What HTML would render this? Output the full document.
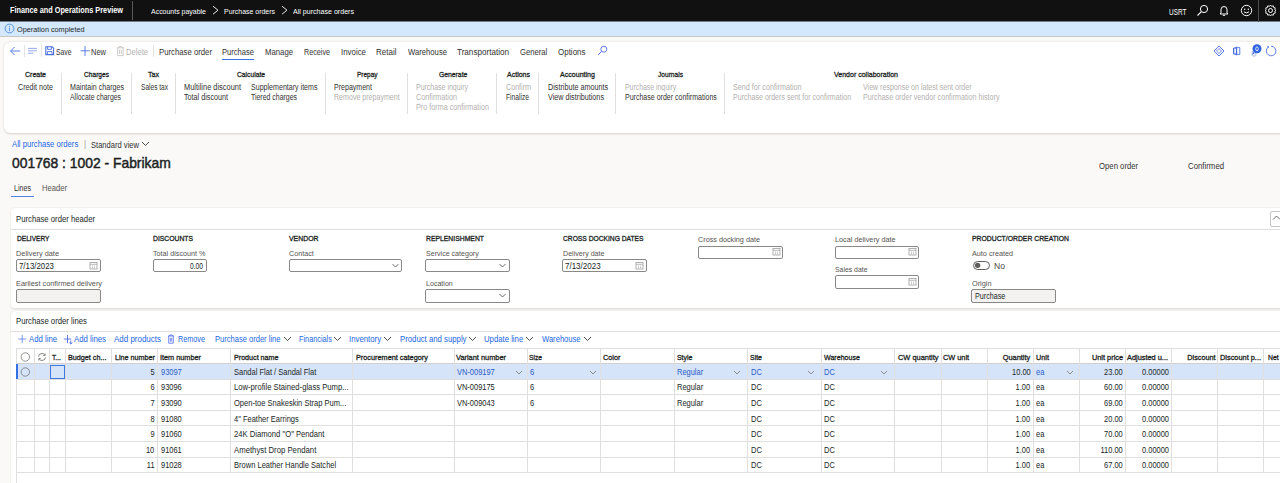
<!DOCTYPE html>
<html><head><meta charset="utf-8"><style>
html,body{margin:0;padding:0;}
body{width:1280px;height:483px;position:relative;overflow:hidden;background:#faf9f8;font-family:"Liberation Sans", sans-serif;}
</style></head><body>
<div style="position:absolute;left:0px;top:0px;width:1280px;height:21px;background:#111111;border-radius:0px;"></div>
<div style="position:absolute;left:0px;top:21px;width:1280px;height:1px;background:#707b86;border-radius:0px;"></div>
<span id="t2" style="position:absolute;left:10px;transform-origin:0 0;top:6.00px;font-size:8.6px;line-height:8.6px;color:#ffffff;font-weight:700;white-space:nowrap;transform:scaleX(0.8510);">Finance and Operations Preview</span>
<div style="position:absolute;left:132px;top:1px;width:1px;height:19px;background:#5a5a5a;border-radius:0px;"></div>
<span id="t4" style="position:absolute;left:151px;transform-origin:0 0;top:8.00px;font-size:7.9px;line-height:7.9px;color:#ffffff;font-weight:400;white-space:nowrap;transform:scaleX(0.8829);">Accounts payable</span>
<svg style="position:absolute;left:212px;top:5px;" width="8" height="11" viewBox="0 0 8 11"><path d="M1 1.2 L6 5.2 L1 9.2" fill="none" stroke="#ffffff" stroke-width="0.9"/></svg>
<span id="t6" style="position:absolute;left:224px;transform-origin:0 0;top:8.00px;font-size:7.9px;line-height:7.9px;color:#ffffff;font-weight:400;white-space:nowrap;transform:scaleX(0.8807);">Purchase orders</span>
<svg style="position:absolute;left:281px;top:5px;" width="8" height="11" viewBox="0 0 8 11"><path d="M1 1.2 L6 5.2 L1 9.2" fill="none" stroke="#ffffff" stroke-width="0.9"/></svg>
<span id="t8" style="position:absolute;left:293px;transform-origin:0 0;top:8.00px;font-size:7.9px;line-height:7.9px;color:#ffffff;font-weight:400;white-space:nowrap;transform:scaleX(0.8973);">All purchase orders</span>
<span id="t9" style="position:absolute;left:1168.6px;transform-origin:0 0;top:8.00px;font-size:9.0px;line-height:9.0px;color:#ffffff;font-weight:400;white-space:nowrap;transform:scaleX(0.7148);">USRT</span>
<svg style="position:absolute;left:1196px;top:4px;" width="13" height="13" viewBox="0 0 13 13"><circle cx="8" cy="5" r="3.6" fill="none" stroke="#fff" stroke-width="1"/><path d="M5.4 7.6 L1.5 11.5" stroke="#fff" stroke-width="1.1"/></svg>
<svg style="position:absolute;left:1218px;top:4px;" width="12" height="13" viewBox="0 0 12 13"><path d="M3 9 V5.5 a3 3 0 0 1 6 0 V9 l1 1 H2 z" fill="none" stroke="#fff" stroke-width="1"/><path d="M4.8 11.3 h2.4" stroke="#fff" stroke-width="1"/></svg>
<svg style="position:absolute;left:1240px;top:4px;" width="13" height="13" viewBox="0 0 13 13"><circle cx="6.5" cy="6.5" r="5.2" fill="none" stroke="#fff" stroke-width="1"/><circle cx="4.7" cy="5.3" r="0.7" fill="#fff"/><circle cx="8.3" cy="5.3" r="0.7" fill="#fff"/><path d="M4 7.8 q2.5 2.4 5 0" fill="none" stroke="#fff" stroke-width="1"/></svg>
<div style="position:absolute;left:1258px;top:0px;width:1px;height:22px;background:#4a4a4a;border-radius:0px;"></div>
<svg style="position:absolute;left:1264px;top:4px;" width="13" height="13" viewBox="0 0 13 13"><circle cx="6.5" cy="6.5" r="2" fill="none" stroke="#fff" stroke-width="1"/><path d="M6.5 1 L7.6 2.4 L9.3 1.8 L9.6 3.5 L11.3 3.9 L10.8 5.6 L12 6.5 L10.8 7.4 L11.3 9.1 L9.6 9.5 L9.3 11.2 L7.6 10.6 L6.5 12 L5.4 10.6 L3.7 11.2 L3.4 9.5 L1.7 9.1 L2.2 7.4 L1 6.5 L2.2 5.6 L1.7 3.9 L3.4 3.5 L3.7 1.8 L5.4 2.4 Z" fill="none" stroke="#fff" stroke-width="0.9"/></svg>
<div style="position:absolute;left:0px;top:22px;width:1280px;height:14px;background:#d3e8fc;border-radius:0px;"></div>
<div style="position:absolute;left:0px;top:36px;width:1280px;height:1px;background:#c8c6c4;border-radius:0px;"></div>
<svg style="position:absolute;left:4px;top:23px;" width="11" height="11" viewBox="0 0 11 11"><circle cx="5.5" cy="5.5" r="4.4" fill="none" stroke="#4f8ad6" stroke-width="0.9"/><path d="M5.5 4.7 V8" stroke="#4f8ad6" stroke-width="0.9"/><circle cx="5.5" cy="3.2" r="0.55" fill="#4f8ad6"/></svg>
<span id="t18" style="position:absolute;left:16.5px;transform-origin:0 0;top:26.00px;font-size:7.9px;line-height:7.9px;color:#201f1e;font-weight:400;white-space:nowrap;transform:scaleX(0.9213);">Operation completed</span>
<div style="position:absolute;left:4px;top:42px;width:1300px;height:91px;background:#ffffff;border-radius:6px;box-shadow:0 0.6px 2px rgba(0,0,0,0.16);"></div>
<svg style="position:absolute;left:9px;top:45px;" width="13" height="12" viewBox="0 0 13 12"><path d="M11.2 6 H1.6 M5.6 2 L1.6 6 L5.6 10" fill="none" stroke="#4a6fe3" stroke-width="0.9"/></svg>
<div style="position:absolute;left:24px;top:45px;width:1px;height:12px;background:#e6e4e2;border-radius:0px;"></div>
<svg style="position:absolute;left:27px;top:45px;" width="11" height="11" viewBox="0 0 11 11"><path d="M1 3.4 H10 M1 5.8 H10 M1 8.2 H6.5" stroke="#8aa0ef" stroke-width="0.9"/></svg>
<div style="position:absolute;left:41px;top:45px;width:1px;height:12px;background:#e6e4e2;border-radius:0px;"></div>
<svg style="position:absolute;left:45px;top:46px;" width="10" height="10" viewBox="0 0 10 10"><path d="M0.8 0.8 H7.2 L8.6 2.2 V8.6 H0.8 Z" fill="none" stroke="#4a6fe3" stroke-width="1.1"/><path d="M2.6 0.8 V3.4 H6.4 V0.8 M2.4 8.6 V5.6 H7 V8.6" fill="none" stroke="#4a6fe3" stroke-width="0.9"/></svg>
<span id="t25" style="position:absolute;left:55.5px;transform-origin:0 0;top:48.00px;font-size:9.2px;line-height:9.2px;color:#323130;font-weight:400;white-space:nowrap;transform:scaleX(0.7397);">Save</span>
<svg style="position:absolute;left:80px;top:45px;" width="11" height="12" viewBox="0 0 11 12"><path d="M5 1 V11 M0.6 5.8 H9.8" stroke="#4a6fe3" stroke-width="0.9"/></svg>
<span id="t27" style="position:absolute;left:91px;transform-origin:0 0;top:48.00px;font-size:9.2px;line-height:9.2px;color:#323130;font-weight:400;white-space:nowrap;transform:scaleX(0.8156);">New</span>
<svg style="position:absolute;left:116px;top:46px;" width="9" height="11" viewBox="0 0 9 11"><path d="M0.8 1.8 H8 M3 1.8 V0.6 H5.8 V1.8 M1.6 1.8 V9.6 H7.2 V1.8 M3.5 3.6 V8 M5.3 3.6 V8" fill="none" stroke="#c8c6c4" stroke-width="0.9"/></svg>
<span id="t29" style="position:absolute;left:126px;transform-origin:0 0;top:48.00px;font-size:9.2px;line-height:9.2px;color:#b3b1af;font-weight:400;white-space:nowrap;transform:scaleX(0.8282);">Delete</span>
<div style="position:absolute;left:153px;top:45px;width:1px;height:12px;background:#e6e4e2;border-radius:0px;"></div>
<span id="t31" style="position:absolute;left:159px;transform-origin:0 0;top:48.00px;font-size:9.2px;line-height:9.2px;color:#323130;font-weight:400;white-space:nowrap;transform:scaleX(0.8436);">Purchase order</span>
<span id="t32" style="position:absolute;left:222px;transform-origin:0 0;top:48.00px;font-size:9.2px;line-height:9.2px;color:#323130;font-weight:400;white-space:nowrap;transform:scaleX(0.8241);">Purchase</span>
<span id="t33" style="position:absolute;left:265px;transform-origin:0 0;top:48.00px;font-size:9.2px;line-height:9.2px;color:#323130;font-weight:400;white-space:nowrap;transform:scaleX(0.8433);">Manage</span>
<span id="t34" style="position:absolute;left:304px;transform-origin:0 0;top:48.00px;font-size:9.2px;line-height:9.2px;color:#323130;font-weight:400;white-space:nowrap;transform:scaleX(0.7831);">Receive</span>
<span id="t35" style="position:absolute;left:341px;transform-origin:0 0;top:48.00px;font-size:9.2px;line-height:9.2px;color:#323130;font-weight:400;white-space:nowrap;transform:scaleX(0.8584);">Invoice</span>
<span id="t36" style="position:absolute;left:376px;transform-origin:0 0;top:48.00px;font-size:9.2px;line-height:9.2px;color:#323130;font-weight:400;white-space:nowrap;transform:scaleX(0.8723);">Retail</span>
<span id="t37" style="position:absolute;left:407.5px;transform-origin:0 0;top:48.00px;font-size:9.2px;line-height:9.2px;color:#323130;font-weight:400;white-space:nowrap;transform:scaleX(0.8359);">Warehouse</span>
<span id="t38" style="position:absolute;left:457px;transform-origin:0 0;top:48.00px;font-size:9.2px;line-height:9.2px;color:#323130;font-weight:400;white-space:nowrap;transform:scaleX(0.8828);">Transportation</span>
<span id="t39" style="position:absolute;left:519.7px;transform-origin:0 0;top:48.00px;font-size:9.2px;line-height:9.2px;color:#323130;font-weight:400;white-space:nowrap;transform:scaleX(0.8352);">General</span>
<span id="t40" style="position:absolute;left:557.5px;transform-origin:0 0;top:48.00px;font-size:9.2px;line-height:9.2px;color:#323130;font-weight:400;white-space:nowrap;transform:scaleX(0.8683);">Options</span>
<div style="position:absolute;left:222px;top:58.5px;width:32px;height:1.6px;background:#3b78e7;border-radius:0px;"></div>
<svg style="position:absolute;left:597px;top:45px;" width="11" height="11" viewBox="0 0 11 11"><circle cx="6.8" cy="4.2" r="3" fill="none" stroke="#4f6bed" stroke-width="0.9"/><path d="M4.7 6.3 L1.2 9.8" stroke="#4f6bed" stroke-width="1"/></svg>
<svg style="position:absolute;left:1213px;top:45px;" width="12" height="12" viewBox="0 0 12 12"><path d="M6 1 L11 6 L6 11 L1 6 Z" fill="none" stroke="#4a6fe3" stroke-width="0.9"/><path d="M6 3.5 L8.5 6 L6 8.5 L3.5 6 Z" fill="none" stroke="#4a6fe3" stroke-width="0.8"/></svg>
<svg style="position:absolute;left:1232px;top:46px;" width="9" height="10" viewBox="0 0 9 10"><path d="M1 2 L5.2 0.6 V9.4 L1 8 Z" fill="#4a6fe3"/><path d="M5.2 1.6 H7.8 V8.4 H5.2" fill="none" stroke="#4a6fe3" stroke-width="0.9"/><rect x="2.3" y="2.6" width="1.6" height="4.8" fill="#fff"/></svg>
<svg style="position:absolute;left:1251px;top:44px;" width="12" height="13" viewBox="0 0 12 13"><rect x="1.2" y="7" width="3.6" height="5" rx="0.8" fill="none" stroke="#9fb0ee" stroke-width="0.9"/><circle cx="6" cy="4.8" r="4.5" fill="#2d62e0"/><path d="M2 8 L1.4 10.6 L4 9" fill="#2d62e0"/><ellipse cx="6" cy="4.8" rx="1.3" ry="2" fill="none" stroke="#fff" stroke-width="0.8"/></svg>
<svg style="position:absolute;left:1265px;top:45px;" width="12" height="12" viewBox="0 0 12 12"><path d="M3.2 2.2 A4.8 4.8 0 1 0 6 1.2" fill="none" stroke="#4a6fe3" stroke-width="0.9"/><path d="M2.2 0.8 L4.2 1.4 L3 3.2 Z" fill="#4a6fe3"/></svg>
<span id="t47" style="position:absolute;left:25px;transform-origin:0 0;top:71.00px;font-size:8.0px;line-height:8.0px;color:#201f1e;font-weight:400;white-space:nowrap;transform:scaleX(0.8744);-webkit-text-stroke:0.3px #201f1e;">Create</span>
<span id="t48" style="position:absolute;left:18px;transform-origin:0 0;top:83.00px;font-size:8.3px;line-height:8.3px;color:#323130;font-weight:400;white-space:nowrap;transform:scaleX(0.8622);">Credit note</span>
<span id="t49" style="position:absolute;left:84px;transform-origin:0 0;top:71.00px;font-size:8.0px;line-height:8.0px;color:#201f1e;font-weight:400;white-space:nowrap;transform:scaleX(0.8264);-webkit-text-stroke:0.3px #201f1e;">Charges</span>
<span id="t50" style="position:absolute;left:70px;transform-origin:0 0;top:83.00px;font-size:8.3px;line-height:8.3px;color:#323130;font-weight:400;white-space:nowrap;transform:scaleX(0.8546);">Maintain charges</span>
<span id="t51" style="position:absolute;left:70px;transform-origin:0 0;top:93.00px;font-size:8.3px;line-height:8.3px;color:#323130;font-weight:400;white-space:nowrap;transform:scaleX(0.8314);">Allocate charges</span>
<span id="t52" style="position:absolute;left:148px;transform-origin:0 0;top:71.00px;font-size:8.0px;line-height:8.0px;color:#201f1e;font-weight:400;white-space:nowrap;transform:scaleX(0.8833);-webkit-text-stroke:0.3px #201f1e;">Tax</span>
<span id="t53" style="position:absolute;left:141px;transform-origin:0 0;top:83.00px;font-size:8.3px;line-height:8.3px;color:#323130;font-weight:400;white-space:nowrap;transform:scaleX(0.7908);">Sales tax</span>
<span id="t54" style="position:absolute;left:237px;transform-origin:0 0;top:71.00px;font-size:8.0px;line-height:8.0px;color:#201f1e;font-weight:400;white-space:nowrap;transform:scaleX(0.8393);-webkit-text-stroke:0.3px #201f1e;">Calculate</span>
<span id="t55" style="position:absolute;left:184px;transform-origin:0 0;top:83.00px;font-size:8.3px;line-height:8.3px;color:#323130;font-weight:400;white-space:nowrap;transform:scaleX(0.8957);">Multiline discount</span>
<span id="t56" style="position:absolute;left:184px;transform-origin:0 0;top:93.00px;font-size:8.3px;line-height:8.3px;color:#323130;font-weight:400;white-space:nowrap;transform:scaleX(0.8673);">Total discount</span>
<span id="t57" style="position:absolute;left:251px;transform-origin:0 0;top:83.00px;font-size:8.3px;line-height:8.3px;color:#323130;font-weight:400;white-space:nowrap;transform:scaleX(0.8532);">Supplementary items</span>
<span id="t58" style="position:absolute;left:251px;transform-origin:0 0;top:93.00px;font-size:8.3px;line-height:8.3px;color:#323130;font-weight:400;white-space:nowrap;transform:scaleX(0.8357);">Tiered charges</span>
<span id="t59" style="position:absolute;left:356.5px;transform-origin:0 0;top:71.00px;font-size:8.0px;line-height:8.0px;color:#201f1e;font-weight:400;white-space:nowrap;transform:scaleX(0.8084);-webkit-text-stroke:0.3px #201f1e;">Prepay</span>
<span id="t60" style="position:absolute;left:334px;transform-origin:0 0;top:83.00px;font-size:8.3px;line-height:8.3px;color:#323130;font-weight:400;white-space:nowrap;transform:scaleX(0.8495);">Prepayment</span>
<span id="t61" style="position:absolute;left:334px;transform-origin:0 0;top:93.00px;font-size:8.3px;line-height:8.3px;color:#b3b1af;font-weight:400;white-space:nowrap;transform:scaleX(0.8531);">Remove prepayment</span>
<span id="t62" style="position:absolute;left:438.7px;transform-origin:0 0;top:71.00px;font-size:8.0px;line-height:8.0px;color:#201f1e;font-weight:400;white-space:nowrap;transform:scaleX(0.8483);-webkit-text-stroke:0.3px #201f1e;">Generate</span>
<span id="t63" style="position:absolute;left:416px;transform-origin:0 0;top:83.00px;font-size:8.3px;line-height:8.3px;color:#b3b1af;font-weight:400;white-space:nowrap;transform:scaleX(0.8413);">Purchase inquiry</span>
<span id="t64" style="position:absolute;left:416px;transform-origin:0 0;top:93.00px;font-size:8.3px;line-height:8.3px;color:#b3b1af;font-weight:400;white-space:nowrap;transform:scaleX(0.8715);">Confirmation</span>
<span id="t65" style="position:absolute;left:416px;transform-origin:0 0;top:103.00px;font-size:8.3px;line-height:8.3px;color:#b3b1af;font-weight:400;white-space:nowrap;transform:scaleX(0.8699);">Pro forma confirmation</span>
<span id="t66" style="position:absolute;left:507px;transform-origin:0 0;top:71.00px;font-size:8.0px;line-height:8.0px;color:#201f1e;font-weight:400;white-space:nowrap;transform:scaleX(0.8767);-webkit-text-stroke:0.3px #201f1e;">Actions</span>
<span id="t67" style="position:absolute;left:506px;transform-origin:0 0;top:83.00px;font-size:8.3px;line-height:8.3px;color:#b3b1af;font-weight:400;white-space:nowrap;transform:scaleX(0.8607);">Confirm</span>
<span id="t68" style="position:absolute;left:506px;transform-origin:0 0;top:93.00px;font-size:8.3px;line-height:8.3px;color:#323130;font-weight:400;white-space:nowrap;transform:scaleX(0.8044);">Finalize</span>
<span id="t69" style="position:absolute;left:560px;transform-origin:0 0;top:71.00px;font-size:8.0px;line-height:8.0px;color:#201f1e;font-weight:400;white-space:nowrap;transform:scaleX(0.8840);-webkit-text-stroke:0.3px #201f1e;">Accounting</span>
<span id="t70" style="position:absolute;left:548px;transform-origin:0 0;top:83.00px;font-size:8.3px;line-height:8.3px;color:#323130;font-weight:400;white-space:nowrap;transform:scaleX(0.8674);">Distribute amounts</span>
<span id="t71" style="position:absolute;left:548px;transform-origin:0 0;top:93.00px;font-size:8.3px;line-height:8.3px;color:#323130;font-weight:400;white-space:nowrap;transform:scaleX(0.8693);">View distributions</span>
<span id="t72" style="position:absolute;left:658px;transform-origin:0 0;top:71.00px;font-size:8.0px;line-height:8.0px;color:#201f1e;font-weight:400;white-space:nowrap;transform:scaleX(0.8264);-webkit-text-stroke:0.3px #201f1e;">Journals</span>
<span id="t73" style="position:absolute;left:624.7px;transform-origin:0 0;top:83.00px;font-size:8.3px;line-height:8.3px;color:#b3b1af;font-weight:400;white-space:nowrap;transform:scaleX(0.8299);">Purchase inquiry</span>
<span id="t74" style="position:absolute;left:624.7px;transform-origin:0 0;top:93.00px;font-size:8.3px;line-height:8.3px;color:#323130;font-weight:400;white-space:nowrap;transform:scaleX(0.8471);">Purchase order confirmations</span>
<span id="t75" style="position:absolute;left:834px;transform-origin:0 0;top:71.00px;font-size:8.0px;line-height:8.0px;color:#201f1e;font-weight:400;white-space:nowrap;transform:scaleX(0.8773);-webkit-text-stroke:0.3px #201f1e;">Vendor collaboration</span>
<span id="t76" style="position:absolute;left:733.4px;transform-origin:0 0;top:83.00px;font-size:8.3px;line-height:8.3px;color:#b3b1af;font-weight:400;white-space:nowrap;transform:scaleX(0.8697);">Send for confirmation</span>
<span id="t77" style="position:absolute;left:733.4px;transform-origin:0 0;top:93.00px;font-size:8.3px;line-height:8.3px;color:#b3b1af;font-weight:400;white-space:nowrap;transform:scaleX(0.8536);">Purchase orders sent for confirmation</span>
<span id="t78" style="position:absolute;left:862.5px;transform-origin:0 0;top:83.00px;font-size:8.3px;line-height:8.3px;color:#b3b1af;font-weight:400;white-space:nowrap;transform:scaleX(0.8503);">View response on latest sent order</span>
<span id="t79" style="position:absolute;left:862.5px;transform-origin:0 0;top:93.00px;font-size:8.3px;line-height:8.3px;color:#b3b1af;font-weight:400;white-space:nowrap;transform:scaleX(0.8604);">Purchase order vendor confirmation history</span>
<div style="position:absolute;left:61px;top:73px;width:1px;height:41px;background:#e1dfdd;border-radius:0px;"></div>
<div style="position:absolute;left:131px;top:73px;width:1px;height:41px;background:#e1dfdd;border-radius:0px;"></div>
<div style="position:absolute;left:175px;top:73px;width:1px;height:41px;background:#e1dfdd;border-radius:0px;"></div>
<div style="position:absolute;left:325px;top:73px;width:1px;height:41px;background:#e1dfdd;border-radius:0px;"></div>
<div style="position:absolute;left:407px;top:73px;width:1px;height:41px;background:#e1dfdd;border-radius:0px;"></div>
<div style="position:absolute;left:496px;top:73px;width:1px;height:41px;background:#e1dfdd;border-radius:0px;"></div>
<div style="position:absolute;left:538px;top:73px;width:1px;height:41px;background:#e1dfdd;border-radius:0px;"></div>
<div style="position:absolute;left:615px;top:73px;width:1px;height:41px;background:#e1dfdd;border-radius:0px;"></div>
<div style="position:absolute;left:724px;top:73px;width:1px;height:41px;background:#e1dfdd;border-radius:0px;"></div>
<span id="t89" style="position:absolute;left:11.75px;transform-origin:0 0;top:140.00px;font-size:8.3px;line-height:8.3px;color:#2266e3;font-weight:400;white-space:nowrap;transform:scaleX(0.9268);">All purchase orders</span>
<span id="t90" style="position:absolute;left:84px;transform-origin:0 0;top:140.00px;font-size:8.3px;line-height:8.3px;color:#a19f9d;font-weight:400;white-space:nowrap;">|</span>
<span id="t91" style="position:absolute;left:91px;transform-origin:0 0;top:141.00px;font-size:9.3px;line-height:9.3px;color:#323130;font-weight:400;white-space:nowrap;transform:scaleX(0.8146);">Standard view</span>
<svg style="position:absolute;left:141px;top:141px;" width="9" height="6" viewBox="0 0 9 6"><path d="M1 1 L4.5 4.5 L8 1" fill="none" stroke="#323130" stroke-width="0.9"/></svg>
<span id="t93" style="position:absolute;left:11.75px;transform-origin:0 0;top:156.00px;font-size:14.2px;line-height:14.2px;color:#201f1e;font-weight:400;white-space:nowrap;transform:scaleX(0.9771);-webkit-text-stroke:0.45px #201f1e;">001768 : 1002 - Fabrikam</span>
<span id="t94" style="position:absolute;left:14px;transform-origin:0 0;top:184.00px;font-size:8.3px;line-height:8.3px;color:#323130;font-weight:400;white-space:nowrap;transform:scaleX(0.8567);">Lines</span>
<span id="t95" style="position:absolute;left:42px;transform-origin:0 0;top:184.00px;font-size:8.3px;line-height:8.3px;color:#55534f;font-weight:400;white-space:nowrap;transform:scaleX(0.9185);">Header</span>
<div style="position:absolute;left:11px;top:195.6px;width:23px;height:1.5px;background:#4a85e8;border-radius:0px;"></div>
<span id="t97" style="position:absolute;left:1098.8px;transform-origin:0 0;top:162.00px;font-size:8.3px;line-height:8.3px;color:#323130;font-weight:400;white-space:nowrap;transform:scaleX(0.9337);">Open order</span>
<span id="t98" style="position:absolute;left:1187.7px;transform-origin:0 0;top:162.00px;font-size:8.3px;line-height:8.3px;color:#323130;font-weight:400;white-space:nowrap;transform:scaleX(0.9430);">Confirmed</span>
<div style="position:absolute;left:10.5px;top:208px;width:1290px;height:99.5px;background:#ffffff;border-radius:4px;box-shadow:0 0.6px 2px rgba(0,0,0,0.14);"></div>
<span id="t100" style="position:absolute;left:16px;transform-origin:0 0;top:215.00px;font-size:8.8px;line-height:8.8px;color:#201f1e;font-weight:400;white-space:nowrap;transform:scaleX(0.8779);">Purchase order header</span>
<div style="position:absolute;left:10.5px;top:229px;width:1290px;height:1px;background:#e1dfdd;border-radius:0px;"></div>
<div style="position:absolute;left:1270px;top:211.3px;width:20px;height:15.3px;background:#ffffff;border:1px solid #c8c6c4;box-sizing:border-box;border-radius:2px;"></div>
<svg style="position:absolute;left:1272px;top:214px;" width="8" height="8" viewBox="0 0 8 8"><path d="M1 5.5 L4.5 2 L8 5.5" fill="none" stroke="#605e5c" stroke-width="0.9"/></svg>
<span id="t104" style="position:absolute;left:16.5px;transform-origin:0 0;top:235.00px;font-size:7.6px;line-height:7.6px;color:#201f1e;font-weight:400;white-space:nowrap;transform:scaleX(0.8681);-webkit-text-stroke:0.32px #201f1e;">DELIVERY</span>
<span id="t105" style="position:absolute;left:16px;transform-origin:0 0;top:250.00px;font-size:8.0px;line-height:8.0px;color:#55534f;font-weight:400;white-space:nowrap;transform:scaleX(0.9210);">Delivery date</span>
<div style="position:absolute;left:16px;top:259.3px;width:84.5px;height:13.199999999999989px;background:#ffffff;border:1px solid #8a8886;box-sizing:border-box;border-radius:2px;"></div>
<span id="t107" style="position:absolute;left:19px;transform-origin:0 0;top:262.00px;font-size:9px;line-height:9px;color:#201f1e;font-weight:400;white-space:nowrap;transform:scaleX(0.8740);">7/13/2023</span>
<svg style="position:absolute;left:89px;top:261px;" width="9" height="9" viewBox="0 0 9 9"><rect x="1" y="1.5" width="7" height="6.5" fill="none" stroke="#a19f9d" stroke-width="0.8"/><path d="M1 3.3 H8 M3 5 h1 M5 5 h1 M3 6.6 h1 M5 6.6 h1" stroke="#a19f9d" stroke-width="0.7"/></svg>
<span id="t109" style="position:absolute;left:16px;transform-origin:0 0;top:280.00px;font-size:8.0px;line-height:8.0px;color:#55534f;font-weight:400;white-space:nowrap;transform:scaleX(0.9167);">Earliest confirmed delivery</span>
<div style="position:absolute;left:16px;top:289px;width:84.5px;height:13.5px;background:#f3f2f1;border:1px solid #8a8886;box-sizing:border-box;border-radius:2px;"></div>
<span id="t111" style="position:absolute;left:153px;transform-origin:0 0;top:235.00px;font-size:7.6px;line-height:7.6px;color:#201f1e;font-weight:400;white-space:nowrap;transform:scaleX(0.8942);-webkit-text-stroke:0.32px #201f1e;">DISCOUNTS</span>
<span id="t112" style="position:absolute;left:153px;transform-origin:0 0;top:250.00px;font-size:8.0px;line-height:8.0px;color:#55534f;font-weight:400;white-space:nowrap;transform:scaleX(0.9010);">Total discount %</span>
<div style="position:absolute;left:152.5px;top:259.3px;width:54.0px;height:13.199999999999989px;background:#ffffff;border:1px solid #8a8886;box-sizing:border-box;border-radius:2px;"></div>
<span id="t114" style="position:absolute;left:190px;transform-origin:0 0;top:262.00px;font-size:9px;line-height:9px;color:#201f1e;font-weight:400;white-space:nowrap;transform:scaleX(0.7415);">0.00</span>
<span id="t115" style="position:absolute;left:289.4px;transform-origin:0 0;top:235.00px;font-size:7.6px;line-height:7.6px;color:#201f1e;font-weight:400;white-space:nowrap;transform:scaleX(0.9108);-webkit-text-stroke:0.32px #201f1e;">VENDOR</span>
<span id="t116" style="position:absolute;left:289px;transform-origin:0 0;top:250.00px;font-size:8.0px;line-height:8.0px;color:#55534f;font-weight:400;white-space:nowrap;transform:scaleX(0.8975);">Contact</span>
<div style="position:absolute;left:289px;top:259.3px;width:113px;height:13.199999999999989px;background:#ffffff;border:1px solid #8a8886;box-sizing:border-box;border-radius:2px;"></div>
<svg style="position:absolute;left:391px;top:263px;" width="9" height="6" viewBox="0 0 9 6"><path d="M1.5 1 L4.5 4 L7.5 1" fill="none" stroke="#605e5c" stroke-width="0.9"/></svg>
<span id="t119" style="position:absolute;left:426px;transform-origin:0 0;top:235.00px;font-size:7.6px;line-height:7.6px;color:#201f1e;font-weight:400;white-space:nowrap;transform:scaleX(0.8984);-webkit-text-stroke:0.32px #201f1e;">REPLENISHMENT</span>
<span id="t120" style="position:absolute;left:426px;transform-origin:0 0;top:250.00px;font-size:8.0px;line-height:8.0px;color:#55534f;font-weight:400;white-space:nowrap;transform:scaleX(0.8852);">Service category</span>
<div style="position:absolute;left:425px;top:259.3px;width:84.69999999999999px;height:13.199999999999989px;background:#ffffff;border:1px solid #8a8886;box-sizing:border-box;border-radius:2px;"></div>
<svg style="position:absolute;left:498px;top:263px;" width="9" height="6" viewBox="0 0 9 6"><path d="M1.5 1 L4.5 4 L7.5 1" fill="none" stroke="#605e5c" stroke-width="0.9"/></svg>
<span id="t123" style="position:absolute;left:426px;transform-origin:0 0;top:280.00px;font-size:8.0px;line-height:8.0px;color:#55534f;font-weight:400;white-space:nowrap;transform:scaleX(0.8860);">Location</span>
<div style="position:absolute;left:425px;top:289px;width:84.69999999999999px;height:13.5px;background:#ffffff;border:1px solid #8a8886;box-sizing:border-box;border-radius:2px;"></div>
<svg style="position:absolute;left:498px;top:293px;" width="9" height="6" viewBox="0 0 9 6"><path d="M1.5 1 L4.5 4 L7.5 1" fill="none" stroke="#605e5c" stroke-width="0.9"/></svg>
<span id="t126" style="position:absolute;left:562.5px;transform-origin:0 0;top:235.00px;font-size:7.6px;line-height:7.6px;color:#201f1e;font-weight:400;white-space:nowrap;transform:scaleX(0.8805);-webkit-text-stroke:0.32px #201f1e;">CROSS DOCKING DATES</span>
<span id="t127" style="position:absolute;left:562.5px;transform-origin:0 0;top:250.00px;font-size:8.0px;line-height:8.0px;color:#55534f;font-weight:400;white-space:nowrap;transform:scaleX(0.8889);">Delivery date</span>
<div style="position:absolute;left:562px;top:259.3px;width:84.5px;height:13.199999999999989px;background:#ffffff;border:1px solid #8a8886;box-sizing:border-box;border-radius:2px;"></div>
<span id="t129" style="position:absolute;left:565px;transform-origin:0 0;top:262.00px;font-size:9px;line-height:9px;color:#201f1e;font-weight:400;white-space:nowrap;transform:scaleX(0.8890);">7/13/2023</span>
<svg style="position:absolute;left:635px;top:261px;" width="9" height="9" viewBox="0 0 9 9"><rect x="1" y="1.5" width="7" height="6.5" fill="none" stroke="#a19f9d" stroke-width="0.8"/><path d="M1 3.3 H8 M3 5 h1 M5 5 h1 M3 6.6 h1 M5 6.6 h1" stroke="#a19f9d" stroke-width="0.7"/></svg>
<span id="t131" style="position:absolute;left:698px;transform-origin:0 0;top:236.00px;font-size:8.0px;line-height:8.0px;color:#55534f;font-weight:400;white-space:nowrap;transform:scaleX(0.9053);">Cross docking date</span>
<div style="position:absolute;left:698.4px;top:245.6px;width:84.60000000000002px;height:13.150000000000006px;background:#ffffff;border:1px solid #8a8886;box-sizing:border-box;border-radius:2px;"></div>
<svg style="position:absolute;left:772px;top:247px;" width="9" height="9" viewBox="0 0 9 9"><rect x="1" y="1.5" width="7" height="6.5" fill="none" stroke="#a19f9d" stroke-width="0.8"/><path d="M1 3.3 H8 M3 5 h1 M5 5 h1 M3 6.6 h1 M5 6.6 h1" stroke="#a19f9d" stroke-width="0.7"/></svg>
<span id="t134" style="position:absolute;left:835px;transform-origin:0 0;top:236.00px;font-size:8.0px;line-height:8.0px;color:#55534f;font-weight:400;white-space:nowrap;transform:scaleX(0.9083);">Local delivery date</span>
<div style="position:absolute;left:835px;top:245.6px;width:84.39999999999998px;height:13.150000000000006px;background:#ffffff;border:1px solid #8a8886;box-sizing:border-box;border-radius:2px;"></div>
<svg style="position:absolute;left:908px;top:247px;" width="9" height="9" viewBox="0 0 9 9"><rect x="1" y="1.5" width="7" height="6.5" fill="none" stroke="#a19f9d" stroke-width="0.8"/><path d="M1 3.3 H8 M3 5 h1 M5 5 h1 M3 6.6 h1 M5 6.6 h1" stroke="#a19f9d" stroke-width="0.7"/></svg>
<span id="t137" style="position:absolute;left:835px;transform-origin:0 0;top:266.00px;font-size:8.0px;line-height:8.0px;color:#55534f;font-weight:400;white-space:nowrap;transform:scaleX(0.8595);">Sales date</span>
<div style="position:absolute;left:835px;top:275.3px;width:84.39999999999998px;height:13.449999999999989px;background:#ffffff;border:1px solid #8a8886;box-sizing:border-box;border-radius:2px;"></div>
<svg style="position:absolute;left:908px;top:277px;" width="9" height="9" viewBox="0 0 9 9"><rect x="1" y="1.5" width="7" height="6.5" fill="none" stroke="#a19f9d" stroke-width="0.8"/><path d="M1 3.3 H8 M3 5 h1 M5 5 h1 M3 6.6 h1 M5 6.6 h1" stroke="#a19f9d" stroke-width="0.7"/></svg>
<span id="t140" style="position:absolute;left:972px;transform-origin:0 0;top:235.00px;font-size:7.6px;line-height:7.6px;color:#201f1e;font-weight:400;white-space:nowrap;transform:scaleX(0.8992);-webkit-text-stroke:0.32px #201f1e;">PRODUCT/ORDER CREATION</span>
<span id="t141" style="position:absolute;left:972px;transform-origin:0 0;top:250.00px;font-size:8.0px;line-height:8.0px;color:#55534f;font-weight:400;white-space:nowrap;transform:scaleX(0.9036);">Auto created</span>
<div style="position:absolute;left:972.8px;top:261px;width:17.2px;height:8.7px;background:#ffffff;border:1px solid #605e5c;box-sizing:border-box;border-radius:5px;"></div>
<svg style="position:absolute;left:974px;top:262px;" width="8" height="7" viewBox="0 0 8 7"><circle cx="3.6" cy="3.35" r="2.7" fill="#605e5c"/></svg>
<span id="t144" style="position:absolute;left:994px;transform-origin:0 0;top:262.00px;font-size:8.3px;line-height:8.3px;color:#484644;font-weight:400;white-space:nowrap;transform:scaleX(1.0368);">No</span>
<span id="t145" style="position:absolute;left:972px;transform-origin:0 0;top:280.00px;font-size:8.0px;line-height:8.0px;color:#55534f;font-weight:400;white-space:nowrap;transform:scaleX(0.9136);">Origin</span>
<div style="position:absolute;left:971px;top:289px;width:84.59999999999991px;height:13.5px;background:#f3f2f1;border:1px solid #8a8886;box-sizing:border-box;border-radius:2px;"></div>
<span id="t147" style="position:absolute;left:974.7px;transform-origin:0 0;top:292.00px;font-size:9px;line-height:9px;color:#201f1e;font-weight:400;white-space:nowrap;transform:scaleX(0.7967);">Purchase</span>
<div style="position:absolute;left:10.5px;top:311px;width:1290px;height:200px;background:#ffffff;border-radius:4px;box-shadow:0 0.6px 2px rgba(0,0,0,0.14);"></div>
<span id="t149" style="position:absolute;left:16px;transform-origin:0 0;top:317.00px;font-size:8.8px;line-height:8.8px;color:#201f1e;font-weight:400;white-space:nowrap;transform:scaleX(0.8799);">Purchase order lines</span>
<div style="position:absolute;left:10.5px;top:331px;width:1290px;height:1px;background:#e1dfdd;border-radius:0px;"></div>
<svg style="position:absolute;left:17px;top:334px;" width="10" height="10" viewBox="0 0 10 10"><path d="M5.2 1 V9 M1.2 5 H9.2" stroke="#5a7ae6" stroke-width="0.8"/></svg>
<span id="t152" style="position:absolute;left:29px;transform-origin:0 0;top:335.00px;font-size:8.6px;line-height:8.6px;color:#2266e3;font-weight:400;white-space:nowrap;transform:scaleX(0.9014);">Add line</span>
<svg style="position:absolute;left:63px;top:334px;" width="11" height="11" viewBox="0 0 11 11"><path d="M4.5 1 V9 M0.8 5 H8.2 M7.8 6.5 V10 M6.3 8.6 L7.8 10 L9.3 8.6" fill="none" stroke="#4f6bed" stroke-width="0.9"/></svg>
<span id="t154" style="position:absolute;left:74px;transform-origin:0 0;top:335.00px;font-size:8.6px;line-height:8.6px;color:#2266e3;font-weight:400;white-space:nowrap;transform:scaleX(0.9050);">Add lines</span>
<span id="t155" style="position:absolute;left:114px;transform-origin:0 0;top:335.00px;font-size:8.6px;line-height:8.6px;color:#2266e3;font-weight:400;white-space:nowrap;transform:scaleX(0.9281);">Add products</span>
<svg style="position:absolute;left:167px;top:334px;" width="8" height="10" viewBox="0 0 8 10"><path d="M1 2 H7 M2.8 2 V1 H5.2 V2 M1.7 2 V9.2 H6.3 V2 M3.3 3.8 V7.6 M4.7 3.8 V7.6" fill="none" stroke="#4f6bed" stroke-width="0.8"/></svg>
<span id="t157" style="position:absolute;left:178px;transform-origin:0 0;top:335.00px;font-size:8.6px;line-height:8.6px;color:#2266e3;font-weight:400;white-space:nowrap;transform:scaleX(0.8438);">Remove</span>
<span id="t158" style="position:absolute;left:215px;transform-origin:0 0;top:335.00px;font-size:8.6px;line-height:8.6px;color:#2266e3;font-weight:400;white-space:nowrap;transform:scaleX(0.8788);">Purchase order line</span>
<svg style="position:absolute;left:282.5px;top:336px;" width="9" height="6" viewBox="0 0 9 6"><path d="M1 1 L4.5 4.5 L8 1" fill="none" stroke="#3b3a39" stroke-width="0.9"/></svg>
<span id="t160" style="position:absolute;left:298.75px;transform-origin:0 0;top:335.00px;font-size:8.6px;line-height:8.6px;color:#2266e3;font-weight:400;white-space:nowrap;transform:scaleX(0.8488);">Financials</span>
<svg style="position:absolute;left:333px;top:336px;" width="9" height="6" viewBox="0 0 9 6"><path d="M1 1 L4.5 4.5 L8 1" fill="none" stroke="#3b3a39" stroke-width="0.9"/></svg>
<span id="t162" style="position:absolute;left:349.3px;transform-origin:0 0;top:335.00px;font-size:8.6px;line-height:8.6px;color:#2266e3;font-weight:400;white-space:nowrap;transform:scaleX(0.9078);">Inventory</span>
<svg style="position:absolute;left:383px;top:336px;" width="9" height="6" viewBox="0 0 9 6"><path d="M1 1 L4.5 4.5 L8 1" fill="none" stroke="#3b3a39" stroke-width="0.9"/></svg>
<span id="t164" style="position:absolute;left:399.5px;transform-origin:0 0;top:335.00px;font-size:8.6px;line-height:8.6px;color:#2266e3;font-weight:400;white-space:nowrap;transform:scaleX(0.9038);">Product and supply</span>
<svg style="position:absolute;left:467.6px;top:336px;" width="9" height="6" viewBox="0 0 9 6"><path d="M1 1 L4.5 4.5 L8 1" fill="none" stroke="#3b3a39" stroke-width="0.9"/></svg>
<span id="t166" style="position:absolute;left:483.8px;transform-origin:0 0;top:335.00px;font-size:8.6px;line-height:8.6px;color:#2266e3;font-weight:400;white-space:nowrap;transform:scaleX(0.9015);">Update line</span>
<svg style="position:absolute;left:524.5px;top:336px;" width="9" height="6" viewBox="0 0 9 6"><path d="M1 1 L4.5 4.5 L8 1" fill="none" stroke="#3b3a39" stroke-width="0.9"/></svg>
<span id="t168" style="position:absolute;left:542px;transform-origin:0 0;top:335.00px;font-size:8.6px;line-height:8.6px;color:#2266e3;font-weight:400;white-space:nowrap;transform:scaleX(0.8845);">Warehouse</span>
<svg style="position:absolute;left:582.5px;top:336px;" width="9" height="6" viewBox="0 0 9 6"><path d="M1 1 L4.5 4.5 L8 1" fill="none" stroke="#3b3a39" stroke-width="0.9"/></svg>
<div style="position:absolute;left:16px;top:364px;width:1270px;height:15px;background:#d6e4f9;border-radius:0px;"></div>
<div style="position:absolute;left:16px;top:348px;width:1270px;height:1px;background:#e1dfdd;border-radius:0px;"></div>
<div style="position:absolute;left:16px;top:363px;width:1270px;height:1px;background:#d2d0ce;border-radius:0px;"></div>
<div style="position:absolute;left:16px;top:379px;width:1270px;height:1px;background:#e1dfdd;border-radius:0px;"></div>
<div style="position:absolute;left:16px;top:394px;width:1270px;height:1px;background:#e1dfdd;border-radius:0px;"></div>
<div style="position:absolute;left:16px;top:410px;width:1270px;height:1px;background:#e1dfdd;border-radius:0px;"></div>
<div style="position:absolute;left:16px;top:425px;width:1270px;height:1px;background:#e1dfdd;border-radius:0px;"></div>
<div style="position:absolute;left:16px;top:441px;width:1270px;height:1px;background:#e1dfdd;border-radius:0px;"></div>
<div style="position:absolute;left:16px;top:457px;width:1270px;height:1px;background:#e1dfdd;border-radius:0px;"></div>
<div style="position:absolute;left:16px;top:472px;width:1270px;height:1px;background:#e1dfdd;border-radius:0px;"></div>
<div style="position:absolute;left:16px;top:348px;width:1px;height:124px;background:#e1dfdd;border-radius:0px;"></div>
<div style="position:absolute;left:34px;top:348px;width:1px;height:124px;background:#e1dfdd;border-radius:0px;"></div>
<div style="position:absolute;left:49px;top:348px;width:1px;height:124px;background:#e1dfdd;border-radius:0px;"></div>
<div style="position:absolute;left:65px;top:348px;width:1px;height:124px;background:#e1dfdd;border-radius:0px;"></div>
<div style="position:absolute;left:111px;top:348px;width:1px;height:124px;background:#e1dfdd;border-radius:0px;"></div>
<div style="position:absolute;left:157px;top:348px;width:1px;height:124px;background:#e1dfdd;border-radius:0px;"></div>
<div style="position:absolute;left:230px;top:348px;width:1px;height:124px;background:#e1dfdd;border-radius:0px;"></div>
<div style="position:absolute;left:352px;top:348px;width:1px;height:124px;background:#e1dfdd;border-radius:0px;"></div>
<div style="position:absolute;left:454px;top:348px;width:1px;height:124px;background:#e1dfdd;border-radius:0px;"></div>
<div style="position:absolute;left:527px;top:348px;width:1px;height:124px;background:#e1dfdd;border-radius:0px;"></div>
<div style="position:absolute;left:600px;top:348px;width:1px;height:124px;background:#e1dfdd;border-radius:0px;"></div>
<div style="position:absolute;left:674px;top:348px;width:1px;height:124px;background:#e1dfdd;border-radius:0px;"></div>
<div style="position:absolute;left:747px;top:348px;width:1px;height:124px;background:#e1dfdd;border-radius:0px;"></div>
<div style="position:absolute;left:821px;top:348px;width:1px;height:124px;background:#e1dfdd;border-radius:0px;"></div>
<div style="position:absolute;left:894px;top:348px;width:1px;height:124px;background:#e1dfdd;border-radius:0px;"></div>
<div style="position:absolute;left:941px;top:348px;width:1px;height:124px;background:#e1dfdd;border-radius:0px;"></div>
<div style="position:absolute;left:987px;top:348px;width:1px;height:124px;background:#e1dfdd;border-radius:0px;"></div>
<div style="position:absolute;left:1033px;top:348px;width:1px;height:124px;background:#e1dfdd;border-radius:0px;"></div>
<div style="position:absolute;left:1079px;top:348px;width:1px;height:124px;background:#e1dfdd;border-radius:0px;"></div>
<div style="position:absolute;left:1125px;top:348px;width:1px;height:124px;background:#e1dfdd;border-radius:0px;"></div>
<div style="position:absolute;left:1171px;top:348px;width:1px;height:124px;background:#e1dfdd;border-radius:0px;"></div>
<div style="position:absolute;left:1217px;top:348px;width:1px;height:124px;background:#e1dfdd;border-radius:0px;"></div>
<div style="position:absolute;left:1263px;top:348px;width:1px;height:124px;background:#e1dfdd;border-radius:0px;"></div>
<div style="position:absolute;left:16px;top:472px;width:1px;height:11px;background:#e1dfdd;border-radius:0px;"></div>
<div style="position:absolute;left:16px;top:364px;width:2px;height:15px;background:#3570e0;border-radius:0px;"></div>
<div style="position:absolute;left:50px;top:364.5px;width:15px;height:14.5px;background:transparent;border:1.4px solid #3d78e4;box-sizing:border-box;border-radius:0px;"></div>
<svg style="position:absolute;left:20px;top:352px;" width="11" height="11" viewBox="0 0 11 11"><circle cx="5.3" cy="5" r="4.2" fill="none" stroke="#797775" stroke-width="0.8"/></svg>
<svg style="position:absolute;left:37px;top:352px;" width="10" height="10" viewBox="0 0 10 10"><path d="M1.5 4.5 A3.5 3.5 0 0 1 8 3.3 M8.5 5.5 A3.5 3.5 0 0 1 2 6.7" fill="none" stroke="#605e5c" stroke-width="0.8"/><path d="M8.2 1.5 V3.5 H6.2 M1.8 8.5 V6.5 H3.8" fill="none" stroke="#797775" stroke-width="0.8"/></svg>
<span id="t208" style="position:absolute;left:52px;transform-origin:0 0;top:354.00px;font-size:7.6px;line-height:7.6px;color:#201f1e;font-weight:400;white-space:nowrap;transform:scaleX(0.8875);-webkit-text-stroke:0.3px #201f1e;">T...</span>
<span id="t209" style="position:absolute;left:67.5px;transform-origin:0 0;top:354.00px;font-size:7.6px;line-height:7.6px;color:#201f1e;font-weight:400;white-space:nowrap;transform:scaleX(0.9499);-webkit-text-stroke:0.3px #201f1e;">Budget ch...</span>
<span id="t210" style="position:absolute;left:115px;transform-origin:0 0;top:354.00px;font-size:7.6px;line-height:7.6px;color:#201f1e;font-weight:400;white-space:nowrap;transform:scaleX(0.9474);-webkit-text-stroke:0.3px #201f1e;">Line number</span>
<span id="t211" style="position:absolute;left:160px;transform-origin:0 0;top:354.00px;font-size:7.6px;line-height:7.6px;color:#201f1e;font-weight:400;white-space:nowrap;transform:scaleX(0.9615);-webkit-text-stroke:0.3px #201f1e;">Item number</span>
<span id="t212" style="position:absolute;left:233.5px;transform-origin:0 0;top:354.00px;font-size:7.6px;line-height:7.6px;color:#201f1e;font-weight:400;white-space:nowrap;transform:scaleX(0.9412);-webkit-text-stroke:0.3px #201f1e;">Product name</span>
<span id="t213" style="position:absolute;left:355.5px;transform-origin:0 0;top:354.00px;font-size:7.6px;line-height:7.6px;color:#201f1e;font-weight:400;white-space:nowrap;transform:scaleX(0.9623);-webkit-text-stroke:0.3px #201f1e;">Procurement category</span>
<span id="t214" style="position:absolute;left:456px;transform-origin:0 0;top:354.00px;font-size:7.6px;line-height:7.6px;color:#201f1e;font-weight:400;white-space:nowrap;transform:scaleX(0.9735);-webkit-text-stroke:0.3px #201f1e;">Variant number</span>
<span id="t215" style="position:absolute;left:529.4px;transform-origin:0 0;top:354.00px;font-size:7.6px;line-height:7.6px;color:#201f1e;font-weight:400;white-space:nowrap;transform:scaleX(0.8863);-webkit-text-stroke:0.3px #201f1e;">Size</span>
<span id="t216" style="position:absolute;left:603px;transform-origin:0 0;top:354.00px;font-size:7.6px;line-height:7.6px;color:#201f1e;font-weight:400;white-space:nowrap;transform:scaleX(0.9583);-webkit-text-stroke:0.3px #201f1e;">Color</span>
<span id="t217" style="position:absolute;left:676.8px;transform-origin:0 0;top:354.00px;font-size:7.6px;line-height:7.6px;color:#201f1e;font-weight:400;white-space:nowrap;transform:scaleX(0.9117);-webkit-text-stroke:0.3px #201f1e;">Style</span>
<span id="t218" style="position:absolute;left:750px;transform-origin:0 0;top:354.00px;font-size:7.6px;line-height:7.6px;color:#201f1e;font-weight:400;white-space:nowrap;transform:scaleX(0.9165);-webkit-text-stroke:0.3px #201f1e;">Site</span>
<span id="t219" style="position:absolute;left:823.8px;transform-origin:0 0;top:354.00px;font-size:7.6px;line-height:7.6px;color:#201f1e;font-weight:400;white-space:nowrap;transform:scaleX(0.9310);-webkit-text-stroke:0.3px #201f1e;">Warehouse</span>
<span id="t220" style="position:absolute;left:898.3px;transform-origin:0 0;top:354.00px;font-size:7.6px;line-height:7.6px;color:#201f1e;font-weight:400;white-space:nowrap;transform:scaleX(0.9768);-webkit-text-stroke:0.3px #201f1e;">CW quantity</span>
<span id="t221" style="position:absolute;left:942.9px;transform-origin:0 0;top:354.00px;font-size:7.6px;line-height:7.6px;color:#201f1e;font-weight:400;white-space:nowrap;transform:scaleX(0.9661);-webkit-text-stroke:0.3px #201f1e;">CW unit</span>
<span id="t222" style="position:absolute;right:249.4000000000001px;transform-origin:100% 0;top:354.00px;font-size:7.6px;line-height:7.6px;color:#201f1e;font-weight:400;white-space:nowrap;transform:scaleX(0.9759);-webkit-text-stroke:0.3px #201f1e;">Quantity</span>
<span id="t223" style="position:absolute;left:1035.5px;transform-origin:0 0;top:354.00px;font-size:7.6px;line-height:7.6px;color:#201f1e;font-weight:400;white-space:nowrap;transform:scaleX(0.9545);-webkit-text-stroke:0.3px #201f1e;">Unit</span>
<span id="t224" style="position:absolute;right:157.20000000000005px;transform-origin:100% 0;top:354.00px;font-size:7.6px;line-height:7.6px;color:#201f1e;font-weight:400;white-space:nowrap;transform:scaleX(0.9726);-webkit-text-stroke:0.3px #201f1e;">Unit price</span>
<span id="t225" style="position:absolute;left:1127.4px;transform-origin:0 0;top:354.00px;font-size:7.6px;line-height:7.6px;color:#201f1e;font-weight:400;white-space:nowrap;transform:scaleX(0.9711);-webkit-text-stroke:0.3px #201f1e;">Adjusted u...</span>
<span id="t226" style="position:absolute;right:64.79999999999995px;transform-origin:100% 0;top:354.00px;font-size:7.6px;line-height:7.6px;color:#201f1e;font-weight:400;white-space:nowrap;transform:scaleX(0.9544);-webkit-text-stroke:0.3px #201f1e;">Discount</span>
<span id="t227" style="position:absolute;left:1219.9px;transform-origin:0 0;top:354.00px;font-size:7.6px;line-height:7.6px;color:#201f1e;font-weight:400;white-space:nowrap;transform:scaleX(0.9711);-webkit-text-stroke:0.3px #201f1e;">Discount p...</span>
<span id="t228" style="position:absolute;left:1268px;transform-origin:0 0;top:354.00px;font-size:7.6px;line-height:7.6px;color:#201f1e;font-weight:400;white-space:nowrap;transform:scaleX(0.9000);-webkit-text-stroke:0.3px #201f1e;">Net amount</span>
<span id="t229" style="position:absolute;right:1125.5px;transform-origin:100% 0;top:368.00px;font-size:8.3px;line-height:8.3px;color:#201f1e;font-weight:400;white-space:nowrap;transform:scaleX(0.9000);">5</span>
<span id="t230" style="position:absolute;left:160.5px;transform-origin:0 0;top:368.00px;font-size:8.3px;line-height:8.3px;color:#2a5cc6;font-weight:400;white-space:nowrap;transform:scaleX(0.9000);">93097</span>
<span id="t231" style="position:absolute;left:234px;transform-origin:0 0;top:368.00px;font-size:8.3px;line-height:8.3px;color:#201f1e;font-weight:400;white-space:nowrap;transform:scaleX(0.9058);">Sandal Flat / Sandal Flat</span>
<span id="t232" style="position:absolute;left:457px;transform-origin:0 0;top:368.00px;font-size:8.3px;line-height:8.3px;color:#2a5cc6;font-weight:400;white-space:nowrap;transform:scaleX(0.9000);">VN-009197</span>
<span id="t233" style="position:absolute;left:530px;transform-origin:0 0;top:368.00px;font-size:8.3px;line-height:8.3px;color:#2a5cc6;font-weight:400;white-space:nowrap;transform:scaleX(0.9000);">6</span>
<span id="t234" style="position:absolute;left:677.4px;transform-origin:0 0;top:368.00px;font-size:8.3px;line-height:8.3px;color:#2a5cc6;font-weight:400;white-space:nowrap;transform:scaleX(0.9000);">Regular</span>
<span id="t235" style="position:absolute;left:750.7px;transform-origin:0 0;top:368.00px;font-size:8.3px;line-height:8.3px;color:#2a5cc6;font-weight:400;white-space:nowrap;transform:scaleX(0.9000);">DC</span>
<span id="t236" style="position:absolute;left:824.4px;transform-origin:0 0;top:368.00px;font-size:8.3px;line-height:8.3px;color:#2a5cc6;font-weight:400;white-space:nowrap;transform:scaleX(0.9000);">DC</span>
<span id="t237" style="position:absolute;right:249.5999999999999px;transform-origin:100% 0;top:368.00px;font-size:8.3px;line-height:8.3px;color:#201f1e;font-weight:400;white-space:nowrap;transform:scaleX(0.9000);">10.00</span>
<span id="t238" style="position:absolute;left:1036px;transform-origin:0 0;top:368.00px;font-size:8.3px;line-height:8.3px;color:#2a5cc6;font-weight:400;white-space:nowrap;transform:scaleX(0.9000);">ea</span>
<span id="t239" style="position:absolute;right:157.20000000000005px;transform-origin:100% 0;top:368.00px;font-size:8.3px;line-height:8.3px;color:#201f1e;font-weight:400;white-space:nowrap;transform:scaleX(0.9000);">23.00</span>
<span id="t240" style="position:absolute;right:111.29999999999995px;transform-origin:100% 0;top:368.00px;font-size:8.3px;line-height:8.3px;color:#201f1e;font-weight:400;white-space:nowrap;transform:scaleX(0.9000);">0.00000</span>
<svg style="position:absolute;left:20px;top:367px;" width="11" height="11" viewBox="0 0 11 11"><circle cx="5.3" cy="5" r="4.2" fill="none" stroke="#797775" stroke-width="0.8"/></svg>
<svg style="position:absolute;left:515px;top:370px;" width="8" height="5" viewBox="0 0 8 5"><path d="M1 1 L4 4 L7 1" fill="none" stroke="#797775" stroke-width="0.8"/></svg>
<svg style="position:absolute;left:589px;top:370px;" width="8" height="5" viewBox="0 0 8 5"><path d="M1 1 L4 4 L7 1" fill="none" stroke="#797775" stroke-width="0.8"/></svg>
<svg style="position:absolute;left:733px;top:370px;" width="8" height="5" viewBox="0 0 8 5"><path d="M1 1 L4 4 L7 1" fill="none" stroke="#797775" stroke-width="0.8"/></svg>
<svg style="position:absolute;left:807px;top:370px;" width="8" height="5" viewBox="0 0 8 5"><path d="M1 1 L4 4 L7 1" fill="none" stroke="#797775" stroke-width="0.8"/></svg>
<svg style="position:absolute;left:880px;top:370px;" width="8" height="5" viewBox="0 0 8 5"><path d="M1 1 L4 4 L7 1" fill="none" stroke="#797775" stroke-width="0.8"/></svg>
<svg style="position:absolute;left:1066px;top:370px;" width="8" height="5" viewBox="0 0 8 5"><path d="M1 1 L4 4 L7 1" fill="none" stroke="#797775" stroke-width="0.8"/></svg>
<span id="t248" style="position:absolute;right:1125.5px;transform-origin:100% 0;top:383.00px;font-size:8.3px;line-height:8.3px;color:#201f1e;font-weight:400;white-space:nowrap;transform:scaleX(0.9000);">6</span>
<span id="t249" style="position:absolute;left:160.5px;transform-origin:0 0;top:383.00px;font-size:8.3px;line-height:8.3px;color:#201f1e;font-weight:400;white-space:nowrap;transform:scaleX(0.9000);">93096</span>
<span id="t250" style="position:absolute;left:234px;transform-origin:0 0;top:383.00px;font-size:8.3px;line-height:8.3px;color:#201f1e;font-weight:400;white-space:nowrap;transform:scaleX(0.9237);">Low-profile Stained-glass Pump...</span>
<span id="t251" style="position:absolute;left:457px;transform-origin:0 0;top:383.00px;font-size:8.3px;line-height:8.3px;color:#201f1e;font-weight:400;white-space:nowrap;transform:scaleX(0.9000);">VN-009175</span>
<span id="t252" style="position:absolute;left:530px;transform-origin:0 0;top:383.00px;font-size:8.3px;line-height:8.3px;color:#201f1e;font-weight:400;white-space:nowrap;transform:scaleX(0.9000);">6</span>
<span id="t253" style="position:absolute;left:677.4px;transform-origin:0 0;top:383.00px;font-size:8.3px;line-height:8.3px;color:#201f1e;font-weight:400;white-space:nowrap;transform:scaleX(0.9000);">Regular</span>
<span id="t254" style="position:absolute;left:750.7px;transform-origin:0 0;top:383.00px;font-size:8.3px;line-height:8.3px;color:#201f1e;font-weight:400;white-space:nowrap;transform:scaleX(0.9000);">DC</span>
<span id="t255" style="position:absolute;left:824.4px;transform-origin:0 0;top:383.00px;font-size:8.3px;line-height:8.3px;color:#201f1e;font-weight:400;white-space:nowrap;transform:scaleX(0.9000);">DC</span>
<span id="t256" style="position:absolute;right:249.5999999999999px;transform-origin:100% 0;top:383.00px;font-size:8.3px;line-height:8.3px;color:#201f1e;font-weight:400;white-space:nowrap;transform:scaleX(0.9000);">1.00</span>
<span id="t257" style="position:absolute;left:1036px;transform-origin:0 0;top:383.00px;font-size:8.3px;line-height:8.3px;color:#201f1e;font-weight:400;white-space:nowrap;transform:scaleX(0.9000);">ea</span>
<span id="t258" style="position:absolute;right:157.20000000000005px;transform-origin:100% 0;top:383.00px;font-size:8.3px;line-height:8.3px;color:#201f1e;font-weight:400;white-space:nowrap;transform:scaleX(0.9000);">60.00</span>
<span id="t259" style="position:absolute;right:111.29999999999995px;transform-origin:100% 0;top:383.00px;font-size:8.3px;line-height:8.3px;color:#201f1e;font-weight:400;white-space:nowrap;transform:scaleX(0.9000);">0.00000</span>
<span id="t260" style="position:absolute;right:1125.5px;transform-origin:100% 0;top:399.00px;font-size:8.3px;line-height:8.3px;color:#201f1e;font-weight:400;white-space:nowrap;transform:scaleX(0.9000);">7</span>
<span id="t261" style="position:absolute;left:160.5px;transform-origin:0 0;top:399.00px;font-size:8.3px;line-height:8.3px;color:#201f1e;font-weight:400;white-space:nowrap;transform:scaleX(0.9000);">93090</span>
<span id="t262" style="position:absolute;left:234px;transform-origin:0 0;top:399.00px;font-size:8.3px;line-height:8.3px;color:#201f1e;font-weight:400;white-space:nowrap;transform:scaleX(0.9085);">Open-toe Snakeskin Strap Pum...</span>
<span id="t263" style="position:absolute;left:457px;transform-origin:0 0;top:399.00px;font-size:8.3px;line-height:8.3px;color:#201f1e;font-weight:400;white-space:nowrap;transform:scaleX(0.9000);">VN-009043</span>
<span id="t264" style="position:absolute;left:530px;transform-origin:0 0;top:399.00px;font-size:8.3px;line-height:8.3px;color:#201f1e;font-weight:400;white-space:nowrap;transform:scaleX(0.9000);">6</span>
<span id="t265" style="position:absolute;left:677.4px;transform-origin:0 0;top:399.00px;font-size:8.3px;line-height:8.3px;color:#201f1e;font-weight:400;white-space:nowrap;transform:scaleX(0.9000);">Regular</span>
<span id="t266" style="position:absolute;left:750.7px;transform-origin:0 0;top:399.00px;font-size:8.3px;line-height:8.3px;color:#201f1e;font-weight:400;white-space:nowrap;transform:scaleX(0.9000);">DC</span>
<span id="t267" style="position:absolute;left:824.4px;transform-origin:0 0;top:399.00px;font-size:8.3px;line-height:8.3px;color:#201f1e;font-weight:400;white-space:nowrap;transform:scaleX(0.9000);">DC</span>
<span id="t268" style="position:absolute;right:249.5999999999999px;transform-origin:100% 0;top:399.00px;font-size:8.3px;line-height:8.3px;color:#201f1e;font-weight:400;white-space:nowrap;transform:scaleX(0.9000);">1.00</span>
<span id="t269" style="position:absolute;left:1036px;transform-origin:0 0;top:399.00px;font-size:8.3px;line-height:8.3px;color:#201f1e;font-weight:400;white-space:nowrap;transform:scaleX(0.9000);">ea</span>
<span id="t270" style="position:absolute;right:157.20000000000005px;transform-origin:100% 0;top:399.00px;font-size:8.3px;line-height:8.3px;color:#201f1e;font-weight:400;white-space:nowrap;transform:scaleX(0.9000);">69.00</span>
<span id="t271" style="position:absolute;right:111.29999999999995px;transform-origin:100% 0;top:399.00px;font-size:8.3px;line-height:8.3px;color:#201f1e;font-weight:400;white-space:nowrap;transform:scaleX(0.9000);">0.00000</span>
<span id="t272" style="position:absolute;right:1125.5px;transform-origin:100% 0;top:415.00px;font-size:8.3px;line-height:8.3px;color:#201f1e;font-weight:400;white-space:nowrap;transform:scaleX(0.9000);">8</span>
<span id="t273" style="position:absolute;left:160.5px;transform-origin:0 0;top:415.00px;font-size:8.3px;line-height:8.3px;color:#201f1e;font-weight:400;white-space:nowrap;transform:scaleX(0.9000);">91080</span>
<span id="t274" style="position:absolute;left:234px;transform-origin:0 0;top:415.00px;font-size:8.3px;line-height:8.3px;color:#201f1e;font-weight:400;white-space:nowrap;transform:scaleX(0.9041);">4" Feather Earrings</span>
<span id="t275" style="position:absolute;left:750.7px;transform-origin:0 0;top:415.00px;font-size:8.3px;line-height:8.3px;color:#201f1e;font-weight:400;white-space:nowrap;transform:scaleX(0.9000);">DC</span>
<span id="t276" style="position:absolute;left:824.4px;transform-origin:0 0;top:415.00px;font-size:8.3px;line-height:8.3px;color:#201f1e;font-weight:400;white-space:nowrap;transform:scaleX(0.9000);">DC</span>
<span id="t277" style="position:absolute;right:249.5999999999999px;transform-origin:100% 0;top:415.00px;font-size:8.3px;line-height:8.3px;color:#201f1e;font-weight:400;white-space:nowrap;transform:scaleX(0.9000);">1.00</span>
<span id="t278" style="position:absolute;left:1036px;transform-origin:0 0;top:415.00px;font-size:8.3px;line-height:8.3px;color:#201f1e;font-weight:400;white-space:nowrap;transform:scaleX(0.9000);">ea</span>
<span id="t279" style="position:absolute;right:157.20000000000005px;transform-origin:100% 0;top:415.00px;font-size:8.3px;line-height:8.3px;color:#201f1e;font-weight:400;white-space:nowrap;transform:scaleX(0.9000);">20.00</span>
<span id="t280" style="position:absolute;right:111.29999999999995px;transform-origin:100% 0;top:415.00px;font-size:8.3px;line-height:8.3px;color:#201f1e;font-weight:400;white-space:nowrap;transform:scaleX(0.9000);">0.00000</span>
<span id="t281" style="position:absolute;right:1125.5px;transform-origin:100% 0;top:430.00px;font-size:8.3px;line-height:8.3px;color:#201f1e;font-weight:400;white-space:nowrap;transform:scaleX(0.9000);">9</span>
<span id="t282" style="position:absolute;left:160.5px;transform-origin:0 0;top:430.00px;font-size:8.3px;line-height:8.3px;color:#201f1e;font-weight:400;white-space:nowrap;transform:scaleX(0.9000);">91060</span>
<span id="t283" style="position:absolute;left:234px;transform-origin:0 0;top:430.00px;font-size:8.3px;line-height:8.3px;color:#201f1e;font-weight:400;white-space:nowrap;transform:scaleX(0.9221);">24K Diamond "O" Pendant</span>
<span id="t284" style="position:absolute;left:750.7px;transform-origin:0 0;top:430.00px;font-size:8.3px;line-height:8.3px;color:#201f1e;font-weight:400;white-space:nowrap;transform:scaleX(0.9000);">DC</span>
<span id="t285" style="position:absolute;left:824.4px;transform-origin:0 0;top:430.00px;font-size:8.3px;line-height:8.3px;color:#201f1e;font-weight:400;white-space:nowrap;transform:scaleX(0.9000);">DC</span>
<span id="t286" style="position:absolute;right:249.5999999999999px;transform-origin:100% 0;top:430.00px;font-size:8.3px;line-height:8.3px;color:#201f1e;font-weight:400;white-space:nowrap;transform:scaleX(0.9000);">1.00</span>
<span id="t287" style="position:absolute;left:1036px;transform-origin:0 0;top:430.00px;font-size:8.3px;line-height:8.3px;color:#201f1e;font-weight:400;white-space:nowrap;transform:scaleX(0.9000);">ea</span>
<span id="t288" style="position:absolute;right:157.20000000000005px;transform-origin:100% 0;top:430.00px;font-size:8.3px;line-height:8.3px;color:#201f1e;font-weight:400;white-space:nowrap;transform:scaleX(0.9000);">70.00</span>
<span id="t289" style="position:absolute;right:111.29999999999995px;transform-origin:100% 0;top:430.00px;font-size:8.3px;line-height:8.3px;color:#201f1e;font-weight:400;white-space:nowrap;transform:scaleX(0.9000);">0.00000</span>
<span id="t290" style="position:absolute;right:1125.5px;transform-origin:100% 0;top:446.00px;font-size:8.3px;line-height:8.3px;color:#201f1e;font-weight:400;white-space:nowrap;transform:scaleX(0.9000);">10</span>
<span id="t291" style="position:absolute;left:160.5px;transform-origin:0 0;top:446.00px;font-size:8.3px;line-height:8.3px;color:#201f1e;font-weight:400;white-space:nowrap;transform:scaleX(0.9000);">91061</span>
<span id="t292" style="position:absolute;left:234px;transform-origin:0 0;top:446.00px;font-size:8.3px;line-height:8.3px;color:#201f1e;font-weight:400;white-space:nowrap;transform:scaleX(0.9342);">Amethyst Drop Pendant</span>
<span id="t293" style="position:absolute;left:750.7px;transform-origin:0 0;top:446.00px;font-size:8.3px;line-height:8.3px;color:#201f1e;font-weight:400;white-space:nowrap;transform:scaleX(0.9000);">DC</span>
<span id="t294" style="position:absolute;left:824.4px;transform-origin:0 0;top:446.00px;font-size:8.3px;line-height:8.3px;color:#201f1e;font-weight:400;white-space:nowrap;transform:scaleX(0.9000);">DC</span>
<span id="t295" style="position:absolute;right:249.5999999999999px;transform-origin:100% 0;top:446.00px;font-size:8.3px;line-height:8.3px;color:#201f1e;font-weight:400;white-space:nowrap;transform:scaleX(0.9000);">1.00</span>
<span id="t296" style="position:absolute;left:1036px;transform-origin:0 0;top:446.00px;font-size:8.3px;line-height:8.3px;color:#201f1e;font-weight:400;white-space:nowrap;transform:scaleX(0.9000);">ea</span>
<span id="t297" style="position:absolute;right:157.20000000000005px;transform-origin:100% 0;top:446.00px;font-size:8.3px;line-height:8.3px;color:#201f1e;font-weight:400;white-space:nowrap;transform:scaleX(0.9000);">110.00</span>
<span id="t298" style="position:absolute;right:111.29999999999995px;transform-origin:100% 0;top:446.00px;font-size:8.3px;line-height:8.3px;color:#201f1e;font-weight:400;white-space:nowrap;transform:scaleX(0.9000);">0.00000</span>
<span id="t299" style="position:absolute;right:1125.5px;transform-origin:100% 0;top:461.00px;font-size:8.3px;line-height:8.3px;color:#201f1e;font-weight:400;white-space:nowrap;transform:scaleX(0.9000);">11</span>
<span id="t300" style="position:absolute;left:160.5px;transform-origin:0 0;top:461.00px;font-size:8.3px;line-height:8.3px;color:#201f1e;font-weight:400;white-space:nowrap;transform:scaleX(0.9000);">91028</span>
<span id="t301" style="position:absolute;left:234px;transform-origin:0 0;top:461.00px;font-size:8.3px;line-height:8.3px;color:#201f1e;font-weight:400;white-space:nowrap;transform:scaleX(0.9081);">Brown Leather Handle Satchel</span>
<span id="t302" style="position:absolute;left:750.7px;transform-origin:0 0;top:461.00px;font-size:8.3px;line-height:8.3px;color:#201f1e;font-weight:400;white-space:nowrap;transform:scaleX(0.9000);">DC</span>
<span id="t303" style="position:absolute;left:824.4px;transform-origin:0 0;top:461.00px;font-size:8.3px;line-height:8.3px;color:#201f1e;font-weight:400;white-space:nowrap;transform:scaleX(0.9000);">DC</span>
<span id="t304" style="position:absolute;right:249.5999999999999px;transform-origin:100% 0;top:461.00px;font-size:8.3px;line-height:8.3px;color:#201f1e;font-weight:400;white-space:nowrap;transform:scaleX(0.9000);">1.00</span>
<span id="t305" style="position:absolute;left:1036px;transform-origin:0 0;top:461.00px;font-size:8.3px;line-height:8.3px;color:#201f1e;font-weight:400;white-space:nowrap;transform:scaleX(0.9000);">ea</span>
<span id="t306" style="position:absolute;right:157.20000000000005px;transform-origin:100% 0;top:461.00px;font-size:8.3px;line-height:8.3px;color:#201f1e;font-weight:400;white-space:nowrap;transform:scaleX(0.9000);">67.00</span>
<span id="t307" style="position:absolute;right:111.29999999999995px;transform-origin:100% 0;top:461.00px;font-size:8.3px;line-height:8.3px;color:#201f1e;font-weight:400;white-space:nowrap;transform:scaleX(0.9000);">0.00000</span>
</body></html>
